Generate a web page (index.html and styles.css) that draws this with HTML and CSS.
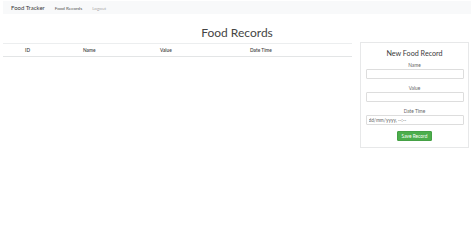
FILE: index.html
```html
<!DOCTYPE html>
<html>
<head>
<meta charset="utf-8">
<link rel="stylesheet" href="styles.css">
</head>
<body>
<nav class="navbar">
  <span class="brand">Food Tracker</span>
  <a class="nav-link active">Food Records</a>
  <a class="nav-link muted">Logout</a>
</nav>
<h1 class="title">Food Records</h1>
<div class="main">
  <div class="table-wrap">
    <table class="records">
      <thead>
        <tr><th class="c-id">ID</th><th class="c-name">Name</th><th class="c-value">Value</th><th class="c-dt">Date Time</th><th class="c-rest"></th></tr>
      </thead>
    </table>
  </div>
  <div class="card">
    <h2 class="card-title">New Food Record</h2>
    <label class="lbl">Name</label>
    <input class="field" type="text">
    <label class="lbl">Value</label>
    <input class="field" type="text">
    <label class="lbl">Date Time</label>
    <input class="field dt" type="text" placeholder="dd/mm/yyyy, --:--">
    <button class="btn">Save Record</button>
  </div>
</div>
</body>
</html>
```
FILE: styles.css
```css
* { box-sizing: border-box; }
body {
  margin: 0;
  padding: 1px 3px 0 3px;
  font-family: Lato, "Open Sans", sans-serif;
  color: #333;
  background: #fff;
}
.navbar {
  display: flex;
  align-items: center;
  height: 13px;
  background: #f8f9fa;
  padding-left: 8px;
}
.brand { font-size: 6px; color: #3a3a3a; margin-right: 10px; }
.nav-link { font-size: 4.6px; margin-right: 10px; }
.nav-link.active { color: #555; }
.nav-link.muted { color: #aaa; }
.title {
  margin: 12px 0 3px 0;
  text-align: center;
  font-size: 12px;
  font-weight: 400;
  color: #444;
  line-height: 13px;
}
.main {
  display: flex;
  align-items: flex-start;
  gap: 8px;
}
.table-wrap { width: 349px; margin-top: 1px; }
.records {
  width: 100%;
  border-collapse: collapse;
}
.records th {
  font-size: 4.8px;
  font-weight: 600;
  color: #444;
  height: 13px;
  border-top: 1px solid #eceeef;
  border-bottom: 1px solid #e3e5e6;
  text-align: left;
  padding: 0;
}
.c-id { width: 80px; padding-left: 22px !important; }
.c-name { width: 77px; }
.c-value { width: 90px; }
.c-dt { width: 60px; }
.card {
  width: 109px;
  height: 106px;
  border: 1px solid #e7e8e9;
  display: flex;
  flex-direction: column;
  align-items: center;
  padding: 4px 5px;
}
.card-title {
  font-size: 7.2px;
  font-weight: 400;
  margin: 2px 0 4px 0;
  color: #3a3a3a;
  line-height: 9px;
}
.lbl {
  font-size: 4.8px;
  color: #666;
  line-height: 6px;
  margin-bottom: 1px;
}
.field {
  width: 98px;
  height: 10px;
  border: 1px solid #ddd;
  border-radius: 1px;
  margin: 0 0 6px 0;
  padding: 0 2px;
  font-size: 4.8px;
  font-family: inherit;
  color: #333;
}
.field.dt::placeholder { color: #666; }
.btn {
  background: #4cae4c;
  color: #fff;
  border: 1px solid #45a045;
  border-radius: 1px;
  font-size: 4.8px;
  font-family: inherit;
  height: 10px;
  padding: 0 4px;
  margin-top: 0;
}
```
